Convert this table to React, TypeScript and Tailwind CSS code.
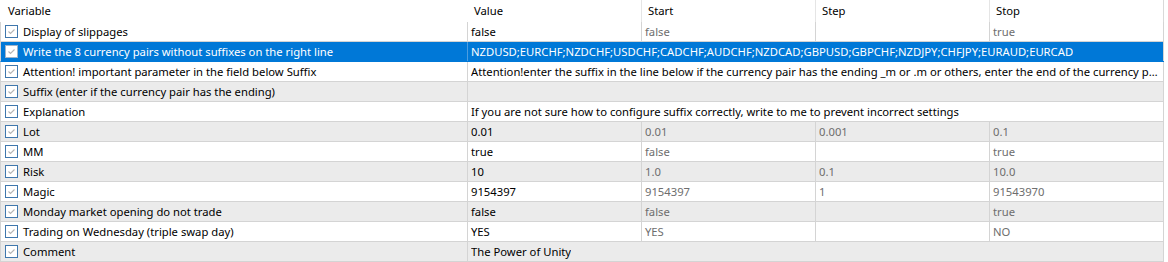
import React from "react";

type Row = {
  name: string;
  value: string;
  start?: string;
  step?: string;
  stop?: string;
  span?: boolean;
  selected?: boolean;
};

const rows: Row[] = [
  { name: "Display of slippages", value: "false", start: "false", step: "", stop: "true" },
  {
    name: "Write the 8 currency pairs without suffixes on the right line",
    value: "NZDUSD;EURCHF;NZDCHF;USDCHF;CADCHF;AUDCHF;NZDCAD;GBPUSD;GBPCHF;NZDJPY;CHFJPY;EURAUD;EURCAD",
    span: true,
    selected: true,
  },
  {
    name: "Attention! important parameter in the field below Suffix",
    value:
      "Attention!enter the suffix in the line below if the currency pair has the ending _m or .m or others, enter the end of the currency pair in the line below",
    span: true,
  },
  { name: "Suffix (enter if the currency pair has the ending)", value: "", span: true },
  {
    name: "Explanation",
    value: "If you are not sure how to configure suffix correctly, write to me to prevent incorrect settings",
    span: true,
  },
  { name: "Lot", value: "0.01", start: "0.01", step: "0.001", stop: "0.1" },
  { name: "MM", value: "true", start: "false", step: "", stop: "true" },
  { name: "Risk", value: "10", start: "1.0", step: "0.1", stop: "10.0" },
  { name: "Magic", value: "9154397", start: "9154397", step: "1", stop: "91543970" },
  { name: "Monday market opening do not trade", value: "false", start: "false", step: "", stop: "true" },
  { name: "Trading on Wednesday (triple swap day)", value: "YES", start: "YES", step: "", stop: "NO" },
  { name: "Comment", value: "The Power of Unity", span: true },
];

function CheckBox({ selected }: { selected?: boolean }) {
  return (
    <div
      className={`w-[13px] h-[13px] shrink-0 border bg-white flex items-center justify-center ${
        selected ? "border-[#9fb3c8]" : "border-[#3f77ad]"
      }`}
    >
      <svg width="11" height="11" viewBox="0 0 11 11">
        <path d="M2.5 5.5 L4.5 7.5 L8.5 3.5" fill="none" stroke="#b4b4b4" strokeWidth="1.1" />
      </svg>
    </div>
  );
}

const font = { fontFamily: "'Noto Sans', 'Open Sans', sans-serif" };

export default function App() {
  return (
    <div
      className="w-[1168px] h-[262px] bg-white overflow-hidden text-[11.25px] leading-[16px] text-black"
      style={font}
    >
      {/* header */}
      <div className="flex h-[22px] w-[1164px] bg-white">
        <div className="w-[468px] flex items-center pl-[8px]">Variable</div>
        <div className="w-[174px] flex items-center pl-[6px] border-r border-[#e5e5e5]">Value</div>
        <div className="w-[174px] flex items-center pl-[6px] border-r border-[#e5e5e5]">Start</div>
        <div className="w-[174px] flex items-center pl-[6px] border-r border-[#e5e5e5]">Step</div>
        <div className="w-[174px] flex items-center pl-[6px] border-r border-[#d9d9d9]">Stop</div>
      </div>
      {rows.map((r, i) => {
        const gray = i % 2 === 1;
        const bg = r.selected ? "bg-[#0078d7] text-white" : gray ? "bg-[#ebebeb]" : "bg-white";
        const rowBorder = r.selected ? "border-b-[#0078d7]" : "border-b-[#d4d4d4]";
        const vline = r.selected ? "border-r-[#4d9de0]" : "border-r-[#d4d4d4]";
        const sub = r.selected ? "text-white" : "text-[#6e6e6e]";
        const main = r.selected ? "text-white" : "text-black";
        return (
          <div
            key={i}
            className={`flex h-[20px] w-[1164px] border-b border-l border-l-[#d4d4d4] ${rowBorder} ${bg}`}
          >
            <div className={`w-[467px] flex items-center pl-[4px] gap-[5px] border-r ${vline}`}>
              <CheckBox selected={r.selected} />
              <span className="whitespace-nowrap">{r.name}</span>
            </div>
            {r.span ? (
              <div
                className={`w-[696px] min-w-0 flex items-center pl-[3px] pr-[4px] border-r border-r-[#d4d4d4] ${main}`}
              >
                <span className="block min-w-0 whitespace-nowrap overflow-hidden text-ellipsis">{r.value}</span>
              </div>
            ) : (
              <>
                <div className={`w-[174px] flex items-center pl-[3px] border-r ${vline} ${main}`}>
                  <span>{r.value}</span>
                </div>
                <div className={`w-[174px] flex items-center pl-[3px] border-r ${vline} ${sub}`}>
                  <span>{r.start}</span>
                </div>
                <div className={`w-[174px] flex items-center pl-[3px] border-r ${vline} ${sub}`}>
                  <span>{r.step}</span>
                </div>
                <div className={`w-[174px] flex items-center pl-[3px] border-r border-r-[#d4d4d4] ${sub}`}>
                  <span>{r.stop}</span>
                </div>
              </>
            )}
          </div>
        );
      })}
    </div>
  );
}
